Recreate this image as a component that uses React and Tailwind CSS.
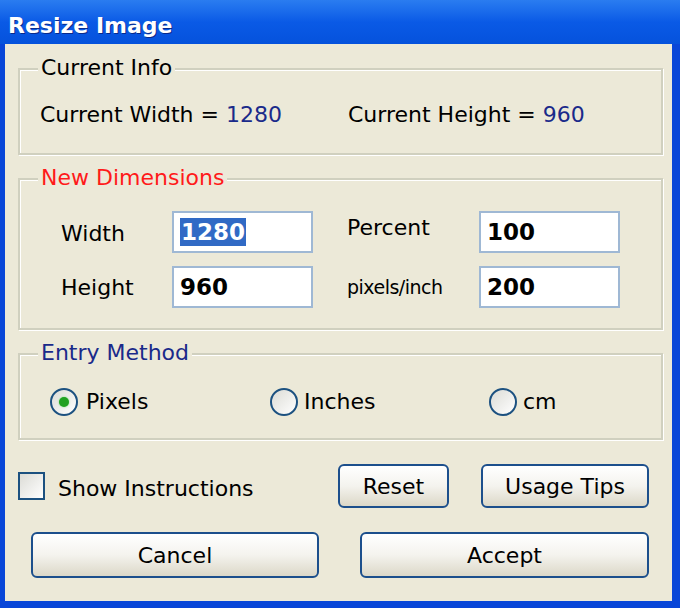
export default function App() {
  const f = { fontFamily: '"DejaVu Sans", Verdana, sans-serif' };
  const btn =
    "flex items-center justify-center rounded-[6px] border-2 border-[#1c4f8c] bg-gradient-to-b from-white via-[#f4f3ee] to-[#dcd8c8] text-[22px] text-black";
  const input =
    "h-[42px] w-[141px] border-2 border-[#9fb8d4] bg-white pl-[6px] flex items-center text-[23px] font-bold text-black";
  const box = "relative w-[645px] border-2 border-[#d0d0bf] shadow-[inset_1px_1px_0_#fff,1px_1px_0_#fff]";
  const legend = "absolute -top-[16px] left-[18px] px-[3px] bg-[#ece9d8] text-[22px] leading-[28px]";
  const Radio = ({ on }) => (
    <div className="w-[28px] h-[28px] rounded-full border-2 border-[#1c5180] bg-gradient-to-br from-[#dcdcd6] to-white flex items-center justify-center">
      {on && <div className="w-[10px] h-[10px] rounded-full bg-[#21a121] shadow-[0_0_2px_#7be07b]" />}
    </div>
  );
  return (
    <div style={f} className="w-[680px] h-[608px] bg-[#0846d8] flex flex-col">
      <div className="h-[44px] bg-gradient-to-b from-[#2a7cf0] via-[#0a5ae6] to-[#0552dc] flex items-center pl-[8px] pt-[6px]">
        <span className="text-white font-bold text-[22px] [text-shadow:1px_1px_0_#0a2a8a]">Resize Image</span>
      </div>
      <div className="ml-[5px] mr-[8px] mb-[7px] flex-1 bg-[#ece9d8] px-[13px] flex flex-col">
        <div className={box + " mt-[24px] h-[87px]"}>
          <span className={legend}>Current Info</span>
          <div className="flex text-[22px] pt-[28px] pl-[20px]">
            <span className="w-[308px]">Current Width = <span className="text-[#1a2a8a]">1280</span></span>
            <span>Current Height = <span className="text-[#1a2a8a]">960</span></span>
          </div>
        </div>
        <div className={box + " mt-[23px] h-[152px]"}>
          <span className={legend + " text-[#ff1a1a]"}>New Dimensions</span>
          <div className="pt-[31px] pl-[41px] flex flex-col gap-[13px]">
            <div className="flex items-center">
              <span className="w-[111px] text-[22px] pt-[2px]">Width</span>
              <div className={input}><span className="bg-[#316ac5] text-white leading-[28px] px-[1px]">1280</span></div>
              <span className="w-[132px] ml-[34px] text-[22px] -mt-[10px]">Percent</span>
              <div className={input}>100</div>
            </div>
            <div className="flex items-center">
              <span className="w-[111px] text-[22px]">Height</span>
              <div className={input}>960</div>
              <span className="w-[132px] ml-[34px] text-[19px] tracking-[-0.5px]">pixels/inch</span>
              <div className={input}>200</div>
            </div>
          </div>
        </div>
        <div className={box + " mt-[23px] h-[87px]"}>
          <span className={legend + " text-[#1a2a8a]"}>Entry Method</span>
          <div className="flex items-center pt-[30px] text-[22px]">
            <div className="flex items-center gap-[8px] ml-[30px] w-[220px]"><Radio on />Pixels</div>
            <div className="flex items-center gap-[6px] w-[219px]"><Radio />Inches</div>
            <div className="flex items-center gap-[6px]"><Radio />cm</div>
          </div>
        </div>
        <div className="flex items-center mt-[24px] h-[44px]">
          <div className="w-[27px] h-[28px] border-2 border-[#1c5180] bg-gradient-to-br from-[#dcdcd6] to-white" />
          <span className="ml-[13px] w-[280px] text-[22px] pt-[4px]">Show Instructions</span>
          <div className={btn + " w-[111px] h-[44px]"}>Reset</div>
          <div className={btn + " w-[168px] h-[44px] ml-[32px]"}>Usage Tips</div>
        </div>
        <div className="flex mt-[24px] ml-[13px]">
          <div className={btn + " w-[288px] h-[46px]"}>Cancel</div>
          <div className={btn + " w-[289px] h-[46px] ml-[41px]"}>Accept</div>
        </div>
      </div>
    </div>
  );
}
